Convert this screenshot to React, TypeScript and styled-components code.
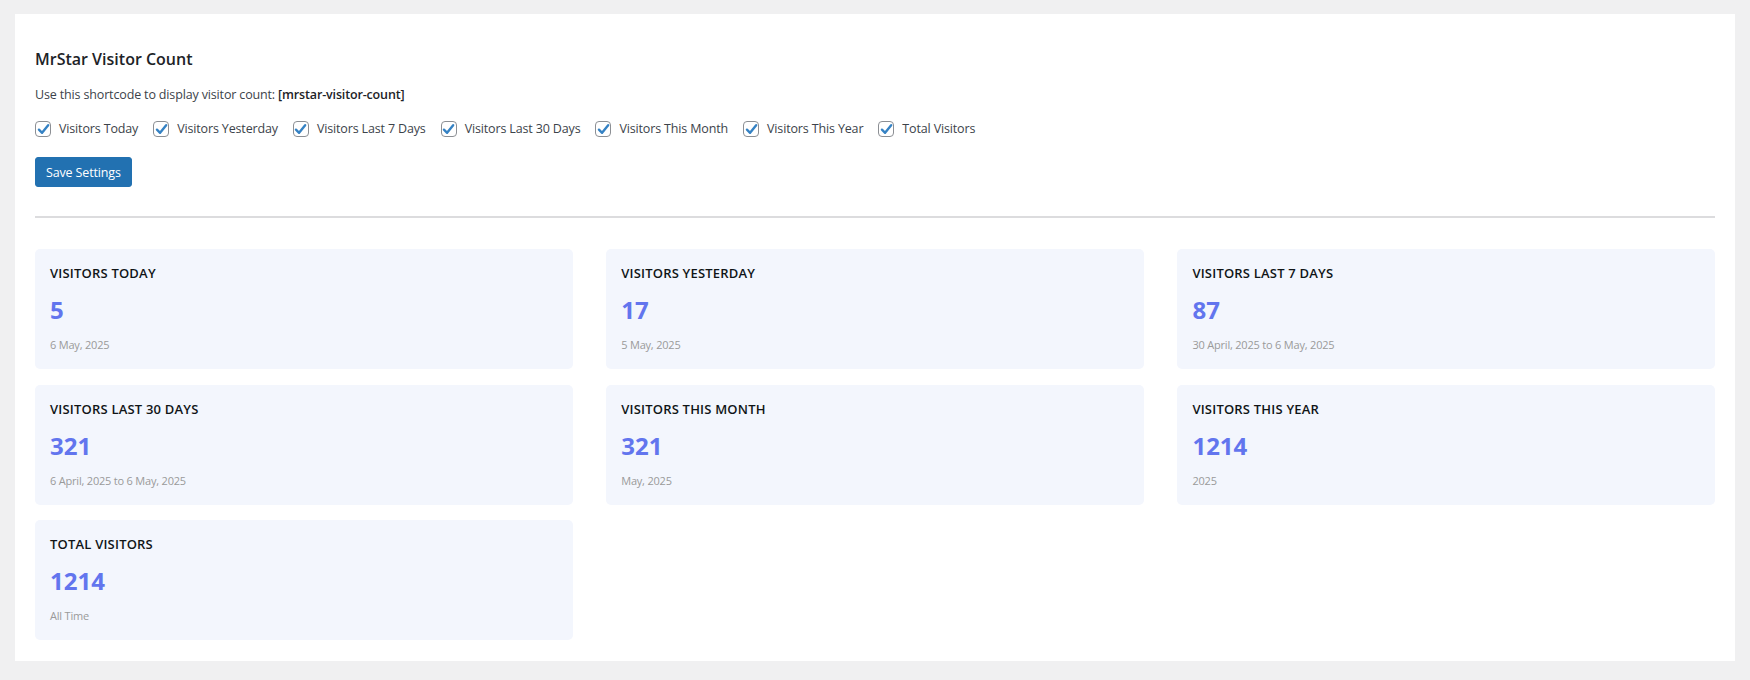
import React, { useState } from 'react';
import styled, { createGlobalStyle } from 'styled-components';

const GlobalStyle = createGlobalStyle`
  body {
    margin: 0;
    background: #f0f0f1;
    font-family: "Open Sans", "Noto Sans", sans-serif;
    color: #3c434a;
  }
`;

const Page = styled.div`
  padding: 14px 15px 19px;
`;

const Panel = styled.div`
  background: #fff;
  padding: 20px 20px 21px;
`;

const Title = styled.h2`
  margin: 13px 0 0;
  font-size: 16px;
  line-height: 24px;
  font-weight: 600;
  color: #1d2327;
`;

const Intro = styled.p`
  margin: 14px 0 0;
  font-size: 12.5px;
  letter-spacing: -0.15px;
  line-height: 20px;
  color: #3c434a;

  strong {
    font-weight: 600;
    color: #1d2327;
  }
`;

const Options = styled.div`
  display: flex;
  flex-wrap: wrap;
  gap: 15px;
  margin-top: 16px;
`;

const Option = styled.label`
  display: flex;
  align-items: center;
  gap: 8px;
  font-size: 12.5px;
  letter-spacing: -0.15px;
  line-height: 16px;
  color: #3c434a;
  cursor: pointer;
`;

const Box = styled.span`
  width: 16px;
  height: 16px;
  box-sizing: border-box;
  border: 1px solid #8c8f94;
  border-radius: 4px;
  background: #fff;
  display: flex;
  align-items: center;
  justify-content: center;
`;

const SaveButton = styled.button`
  margin-top: 20px;
  height: 30px;
  padding: 0 10px;
  background: #2271b1;
  border: 1px solid #2271b1;
  border-radius: 3px;
  color: #fff;
  font-family: inherit;
  font-size: 12.5px;
  letter-spacing: -0.15px;
  cursor: pointer;
`;

const Divider = styled.hr`
  margin: 29px 0 0;
  border: 0;
  border-top: 2px solid #dcdcde;
`;

const Grid = styled.div`
  display: grid;
  grid-template-columns: repeat(3, 32%);
  justify-content: space-between;
  row-gap: 15.5px;
  margin-top: 31px;
`;

const Card = styled.div`
  background: #f3f6fd;
  border-radius: 5px;
  padding: 15px 15px 16px;
`;

const CardTitle = styled.h3`
  margin: 0;
  font-size: 13px;
  letter-spacing: 0.2px;
  line-height: 18px;
  font-weight: 600;
  text-transform: uppercase;
  color: #101517;
`;

const Count = styled.div`
  margin-top: 13px;
  font-size: 24px;
  line-height: 30px;
  font-weight: 700;
  color: #6275ee;
`;

const Period = styled.div`
  margin-top: 12px;
  font-size: 11px;
  letter-spacing: -0.2px;
  line-height: 16px;
  color: #9a9a9a;
`;

const options = [
  'Visitors Today',
  'Visitors Yesterday',
  'Visitors Last 7 Days',
  'Visitors Last 30 Days',
  'Visitors This Month',
  'Visitors This Year',
  'Total Visitors',
];

const stats = [
  { label: 'Visitors Today', count: 5, period: '6 May, 2025' },
  { label: 'Visitors Yesterday', count: 17, period: '5 May, 2025' },
  { label: 'Visitors Last 7 Days', count: 87, period: '30 April, 2025 to 6 May, 2025' },
  { label: 'Visitors Last 30 Days', count: 321, period: '6 April, 2025 to 6 May, 2025' },
  { label: 'Visitors This Month', count: 321, period: 'May, 2025' },
  { label: 'Visitors This Year', count: 1214, period: '2025' },
  { label: 'Total Visitors', count: 1214, period: 'All Time' },
];

const Check = () => (
  <svg width="13" height="13" viewBox="0 0 12 12">
    <path d="M1.8 6.2l2.9 2.9 5.6-7" fill="none" stroke="#3582c4" strokeWidth="2.2" strokeLinecap="round" strokeLinejoin="round" />
  </svg>
);

const App: React.FC = () => {
  const [checked, setChecked] = useState<boolean[]>(options.map(() => true));

  const toggle = (i: number) => {
    setChecked(prev => prev.map((v, j) => (j === i ? !v : v)));
  };

  return (
    <Page>
      <GlobalStyle />
      <Panel>
        <Title>MrStar Visitor Count</Title>
        <Intro>
          Use this shortcode to display visitor count: <strong>[mrstar-visitor-count]</strong>
        </Intro>
        <Options>
          {options.map((o, i) => (
            <Option key={o} onClick={() => toggle(i)}>
              <Box>{checked[i] && <Check />}</Box>
              {o}
            </Option>
          ))}
        </Options>
        <SaveButton type="button">Save Settings</SaveButton>
        <Divider />
        <Grid>
          {stats.map(s => (
            <Card key={s.label}>
              <CardTitle>{s.label}</CardTitle>
              <Count>{s.count}</Count>
              <Period>{s.period}</Period>
            </Card>
          ))}
        </Grid>
      </Panel>
    </Page>
  );
};

export default App;
